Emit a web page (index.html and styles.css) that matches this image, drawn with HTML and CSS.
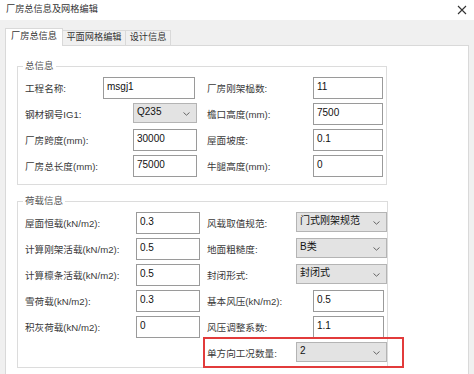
FILE: index.html
```html
<!DOCTYPE html>
<html lang="zh">
<head>
<meta charset="utf-8">
<title>厂房总信息及网格编辑</title>
<link rel="stylesheet" href="styles.css">
</head>
<body>
<div class="win">
  <div class="titlebar">
    <span class="title">厂房总信息及网格编辑</span>
    <svg class="close" width="10" height="10" viewBox="0 0 10 10"><path d="M1 1L9 9M9 1L1 9" stroke="#333" stroke-width="1.1" fill="none"/></svg>
  </div>
  <div class="tabs">
    <div class="tab active t1">厂房总信息</div>
    <div class="tab t2">平面网格编辑</div>
    <div class="tab t3">设计信息</div>
  </div>
  <div class="panel">
    <div class="group g1">
      <span class="legend">总信息</span>
      <div class="grid grid1">
        <span class="lbl">工程名称:</span>
        <div class="inp wide">msgj1</div>
        <span class="lbl r">厂房刚架榀数:</span>
        <div class="inp">11</div>

        <span class="lbl">钢材钢号IG1:</span>
        <div class="combo c1">Q235<svg class="chev" width="7" height="4" viewBox="0 0 7 4"><path d="M0.5 0.5L3.5 3.2L6.5 0.5" stroke="#666" fill="none"/></svg></div>
        <span class="lbl r">檐口高度(mm):</span>
        <div class="inp">7500</div>

        <span class="lbl">厂房跨度(mm):</span>
        <div class="inp c1">30000</div>
        <span class="lbl r">屋面坡度:</span>
        <div class="inp">0.1</div>

        <span class="lbl">厂房总长度(mm):</span>
        <div class="inp c1">75000</div>
        <span class="lbl r">牛腿高度(mm):</span>
        <div class="inp">0</div>
      </div>
    </div>

    <div class="group g2">
      <span class="legend">荷载信息</span>
      <div class="grid grid2">
        <span class="lbl">屋面恒载(kN/m2):</span>
        <div class="inp">0.3</div>
        <span class="lbl r">风载取值规范:</span>
        <div class="combo wc">门式刚架规范<svg class="chev" width="7" height="4" viewBox="0 0 7 4"><path d="M0.5 0.5L3.5 3.2L6.5 0.5" stroke="#666" fill="none"/></svg></div>

        <span class="lbl">计算刚架活载(kN/m2):</span>
        <div class="inp">0.5</div>
        <span class="lbl r">地面粗糙度:</span>
        <div class="combo wc">B类<svg class="chev" width="7" height="4" viewBox="0 0 7 4"><path d="M0.5 0.5L3.5 3.2L6.5 0.5" stroke="#666" fill="none"/></svg></div>

        <span class="lbl">计算檩条活载(kN/m2):</span>
        <div class="inp">0.5</div>
        <span class="lbl r">封闭形式:</span>
        <div class="combo wc">封闭式<svg class="chev" width="7" height="4" viewBox="0 0 7 4"><path d="M0.5 0.5L3.5 3.2L6.5 0.5" stroke="#666" fill="none"/></svg></div>

        <span class="lbl">雪荷载(kN/m2):</span>
        <div class="inp">0.3</div>
        <span class="lbl r">基本风压(kN/m2):</span>
        <div class="inp wi">0.5</div>

        <span class="lbl">积灰荷载(kN/m2):</span>
        <div class="inp">0</div>
        <span class="lbl r">风压调整系数:</span>
        <div class="inp wi">1.1</div>

        <span class="lbl"></span>
        <div></div>
        <span class="lbl r">单方向工况数量:</span>
        <div class="combo wc">2<svg class="chev" width="7" height="4" viewBox="0 0 7 4"><path d="M0.5 0.5L3.5 3.2L6.5 0.5" stroke="#666" fill="none"/></svg></div>
      </div>
    </div>
  </div>
  <div class="mark"></div>
</div>
</body>
</html>
```

FILE: styles.css
```css
html, body {
  margin: 0;
  padding: 0;
}
body {
  width: 474px;
  height: 374px;
  overflow: hidden;
  background: #f0f0f0;
  font-family: "Liberation Sans", "Noto Sans CJK SC", sans-serif;
  color: #333;
}
.win {
  position: relative;
  width: 474px;
  height: 374px;
}
.titlebar {
  height: 20px;
  background: #fff;
  display: flex;
  align-items: center;
  justify-content: space-between;
  padding: 0 7px 0 6px;
  box-sizing: border-box;
}
.title {
  font-size: 9.2px;
  color: #333;
  line-height: 1;
}
.close {
  display: block;
}
.tabs {
  display: flex;
  align-items: flex-end;
  margin: 8px 0 0 5px;
  height: 17px;
}
.tab {
  box-sizing: border-box;
  height: 15px;
  border: 1px solid #d9d9d9;
  border-bottom: none;
  background: #f0f0f0;
  font-size: 9.2px;
  line-height: 13px;
  text-align: center;
  color: #333;
}
.tab.active {
  height: 18px;
  background: #fff;
  margin-bottom: -1px;
  position: relative;
  z-index: 1;
  line-height: 15px;
}
.t1 { width: 58px; }
.t2 { width: 63px; border-left: none; }
.t3 { width: 45px; border-left: none; }
.panel {
  box-sizing: border-box;
  margin-left: 5px;
  width: 464px;
  height: 340px;
  background: #fff;
  border: 1px solid #d9d9d9;
  padding: 20px 0 0 11px;
}
.group {
  position: relative;
  box-sizing: border-box;
  border: 1px solid #dcdcdc;
}
.legend {
  position: absolute;
  top: -8px;
  left: 5px;
  padding: 0 2px;
  background: #fff;
  font-size: 9.5px;
  line-height: 14px;
  color: #555;
}
.g1 {
  width: 370px;
  padding: 10px 2px 7px 7px;
}
.g2 {
  width: 371px;
  margin-top: 16px;
  padding: 10px 0 3px 7px;
}
.grid {
  display: grid;
  grid-auto-rows: 22px;
  row-gap: 4px;
  align-items: center;
}
.grid1 {
  grid-template-columns: 78px 94px 116px 70px;
}
.grid2 {
  grid-template-columns: 111px 64px 96px 91px;
}
.lbl {
  font-size: 9.6px;
  color: #3a3a3a;
  white-space: nowrap;
}
.lbl.r {
  padding-left: 7px;
}
.grid1 .lbl.r {
  padding-left: 10px;
}
.inp {
  box-sizing: border-box;
  height: 22px;
  border: 1px solid #9a9a9a;
  background: #fff;
  font-size: 10px;
  line-height: 14px;
  padding: 2px 0 0 3px;
  color: #111;
}
.grid1 .inp.wide {
  width: 92px;
}
.grid1 .c1 {
  width: 64px;
  justify-self: end;
}
.combo {
  position: relative;
  box-sizing: border-box;
  height: 20px;
  border: 1px solid #b4b4b4;
  background: #e3e3e3;
  font-size: 10px;
  line-height: 14px;
  padding: 1px 0 0 3px;
  color: #111;
  align-self: start;
}
.chev {
  position: absolute;
  right: 6px;
  top: 8px;
}
.grid2 .inp.wi {
  width: 71px;
  margin-left: 17px;
}
.mark {
  position: absolute;
  left: 203px;
  top: 337px;
  width: 201px;
  height: 31px;
  box-sizing: border-box;
  border: 2px solid #e23b3b;
}
```
